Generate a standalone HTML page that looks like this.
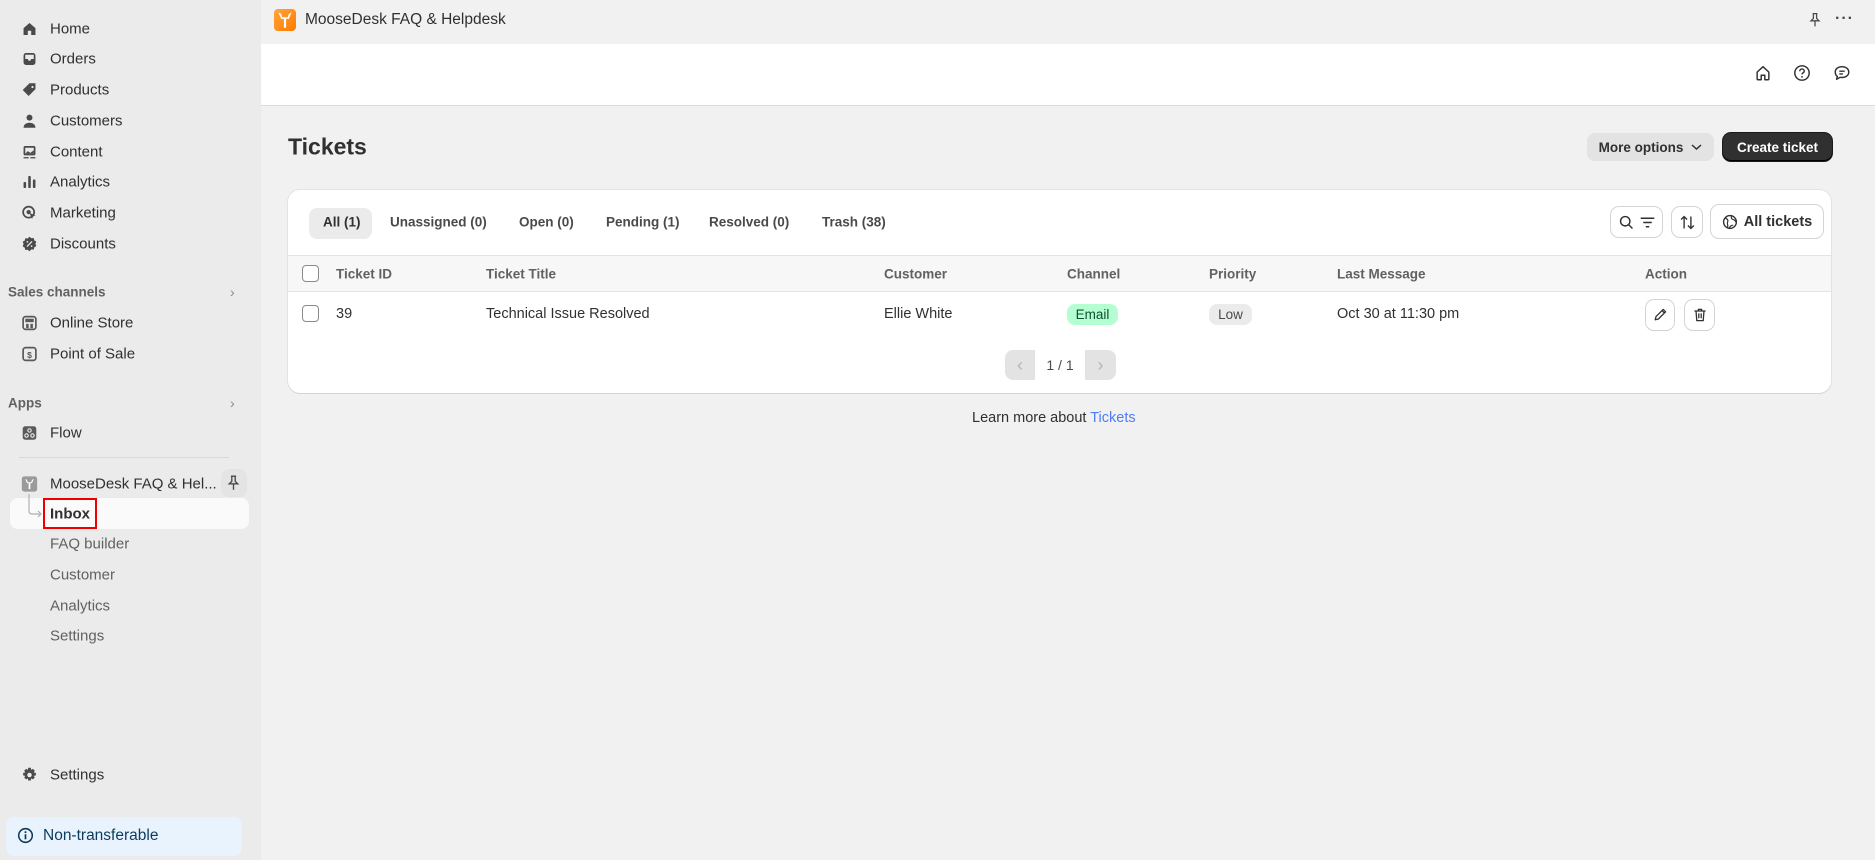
<!DOCTYPE html>
<html><head><meta charset="utf-8"><style>
*{box-sizing:border-box;margin:0;padding:0}
body{width:1875px;height:860px;overflow:hidden;background:#f1f1f1;font-family:"Liberation Sans",sans-serif;color:#303030;position:relative;font-size:15px}
.abs{position:absolute}
#side{position:absolute;left:0;top:0;width:261px;height:860px;background:#ebebeb}
.ni{position:absolute;left:50px;font-size:15px;color:#303030;transform:translateY(-50%);white-space:nowrap}
.ic{position:absolute;left:21px;width:17px;height:17px;transform:translateY(-50%)}
.sec{position:absolute;left:8px;font-size:13.5px;color:#616161;font-weight:bold;transform:translateY(-50%)}
.chev{position:absolute;left:230px;color:#8a8a8a;font-size:14px;transform:translateY(-50%)}
.sub{position:absolute;left:50px;font-size:15px;color:#616161;transform:translateY(-50%)}
.card{position:absolute;left:288px;top:190px;width:1543px;height:203px;background:#fff;border-radius:12px;box-shadow:0 1px 0 #d4d4d4,0 0 0 1px #e3e3e3}
.tab{position:absolute;top:222px;transform:translateY(-50%);font-size:13.5px;color:#4a4a4a;font-weight:bold}
.th{position:absolute;top:274px;transform:translateY(-50%);font-size:13.5px;color:#616161;font-weight:bold}
.td{position:absolute;top:314px;transform:translateY(-50%);font-size:14.5px;color:#303030}
.cb{position:absolute;width:17px;height:17px;border:1.5px solid #8a8a8a;border-radius:4px;background:#fff}
.btn{position:absolute;background:#fff;border-radius:8px;box-shadow:0 0 0 1px #d4d4d4,0 1px 0 #c0c0c0;display:flex;align-items:center;justify-content:center}
</style></head><body>
<div id="side">
  <svg class="ic" style="top:29px" viewBox="0 0 20 20"><path d="M3 9l7-6 7 6v8h-5v-5H8v5H3z" fill="#4a4a4a"/></svg>
  <div class="ni" style="top:29px">Home</div>
  <svg class="ic" style="top:59px" viewBox="0 0 20 20"><rect x="3" y="3" width="14" height="14" rx="3" fill="#4a4a4a"/><path d="M5 10h3l1 2h2l1-2h3v-5H5z" fill="#ebebeb"/></svg>
  <div class="ni" style="top:59px">Orders</div>
  <svg class="ic" style="top:90px" viewBox="0 0 20 20"><path d="M10 2h7v7l-8 8-7-7z" fill="#4a4a4a"/><circle cx="13.5" cy="6.5" r="1.3" fill="#ebebeb"/></svg>
  <div class="ni" style="top:90px">Products</div>
  <svg class="ic" style="top:121px" viewBox="0 0 20 20"><circle cx="10" cy="6" r="3.5" fill="#4a4a4a"/><path d="M3 18c0-4 3-6 7-6s7 2 7 6z" fill="#4a4a4a"/></svg>
  <div class="ni" style="top:121px">Customers</div>
  <svg class="ic" style="top:152px" viewBox="0 0 20 20"><rect x="3" y="3" width="14" height="11" rx="2" fill="#4a4a4a"/><rect x="5" y="5" width="10" height="7" fill="#ebebeb"/><path d="M5 12l3-3 3 2 4-3v4z" fill="#4a4a4a"/><rect x="3" y="16" width="6" height="1.5" fill="#4a4a4a"/><rect x="11" y="16" width="6" height="1.5" fill="#4a4a4a"/></svg>
  <div class="ni" style="top:152px">Content</div>
  <svg class="ic" style="top:182px" viewBox="0 0 20 20"><rect x="3" y="10" width="3" height="7" rx="1" fill="#4a4a4a"/><rect x="8.5" y="3" width="3" height="14" rx="1" fill="#4a4a4a"/><rect x="14" y="7" width="3" height="10" rx="1" fill="#4a4a4a"/></svg>
  <div class="ni" style="top:182px">Analytics</div>
  <svg class="ic" style="top:213px" viewBox="0 0 20 20"><circle cx="9" cy="9" r="6.5" fill="none" stroke="#4a4a4a" stroke-width="2"/><circle cx="9" cy="9" r="2.5" fill="#4a4a4a"/><path d="M10 10l7 3-3 1-1 3z" fill="#4a4a4a"/></svg>
  <div class="ni" style="top:213px">Marketing</div>
  <svg class="ic" style="top:244px" viewBox="0 0 20 20"><path d="M10 1.5l2.2 1.8 2.8-.3.6 2.8 2.5 1.4-1.2 2.6 1.2 2.6-2.5 1.4-.6 2.8-2.8-.3L10 18.5l-2.2-1.8-2.8.3-.6-2.8-2.5-1.4L3.1 10 1.9 7.4l2.5-1.4.6-2.8 2.8.3z" fill="#4a4a4a"/><path d="M7 13l6-6" stroke="#ebebeb" stroke-width="1.5"/><circle cx="7.5" cy="7.5" r="1" fill="#ebebeb"/><circle cx="12.5" cy="12.5" r="1" fill="#ebebeb"/></svg>
  <div class="ni" style="top:244px">Discounts</div>
  <div class="sec" style="top:292px">Sales channels</div><div class="chev" style="top:292px">›</div>
  <svg class="ic" style="top:323px" viewBox="0 0 20 20"><rect x="2.5" y="2.5" width="15" height="15" rx="3" fill="none" stroke="#5a5a5a" stroke-width="2"/><rect x="5" y="5" width="10" height="4" fill="#5a5a5a"/><rect x="6" y="11" width="3" height="5" fill="#5a5a5a"/><rect x="11" y="11" width="3" height="5" fill="#5a5a5a"/></svg>
  <div class="ni" style="top:323px">Online Store</div>
  <svg class="ic" style="top:354px" viewBox="0 0 20 20"><rect x="2.5" y="2.5" width="15" height="15" rx="3" fill="none" stroke="#5a5a5a" stroke-width="2"/><text x="10" y="14.5" font-size="10" font-weight="bold" text-anchor="middle" fill="#5a5a5a" font-family="Liberation Sans">$</text></svg>
  <div class="ni" style="top:354px">Point of Sale</div>
  <div class="sec" style="top:403px">Apps</div><div class="chev" style="top:403px">›</div>
  <svg class="ic" style="top:433px" viewBox="0 0 20 20"><rect x="2" y="2" width="16" height="16" rx="3" fill="#5a5a5a"/><circle cx="10" cy="7" r="2" fill="none" stroke="#ebebeb" stroke-width="1.3"/><circle cx="6.5" cy="13" r="2" fill="none" stroke="#ebebeb" stroke-width="1.3"/><circle cx="13.5" cy="13" r="2" fill="none" stroke="#ebebeb" stroke-width="1.3"/></svg>
  <div class="ni" style="top:433px">Flow</div>
  <div class="abs" style="left:19px;top:457px;width:210px;height:1px;background:#d8d8d8"></div>
  <svg class="ic" style="top:484px" viewBox="0 0 20 20"><rect x="1" y="1" width="18" height="18" rx="3" fill="#9a9a9a"/><path d="M5 4l2 5h2v7h2V9h2l2-5-2 1-1 3H8L7 5z" fill="#fff"/></svg>
  <div class="ni" style="top:484px">MooseDesk FAQ &amp; Hel...</div>
  <div class="abs" style="left:221px;top:469px;width:26px;height:28px;border-radius:8px;background:#e4e4e4"></div>
  <svg class="abs" style="left:225px;top:474px" width="17" height="18" viewBox="0 0 20 20"><path d="M7 2h6M8 2v6l-3 3h10l-3-3V2M10 11v7" fill="none" stroke="#4a4a4a" stroke-width="1.6"/></svg>
  <div class="abs" style="left:10px;top:498px;width:239px;height:31px;border-radius:8px;background:#fafafa"></div>
  <svg class="abs" style="left:26px;top:494px" width="18" height="26" viewBox="0 0 18 26"><path d="M3 0v17q0 3 3 3h9M12 17l3 3-3 3" fill="none" stroke="#b0b0b0" stroke-width="1.2"/></svg>
  <div class="abs" style="left:43px;top:498px;width:54px;height:31px;border:2px solid #e00"></div>
  <div class="ni" style="top:514px;font-weight:bold;color:#303030">Inbox</div>
  <div class="sub" style="top:544px">FAQ builder</div>
  <div class="sub" style="top:575px">Customer</div>
  <div class="sub" style="top:606px">Analytics</div>
  <div class="sub" style="top:636px">Settings</div>
  <svg class="ic" style="top:775px" viewBox="0 0 20 20"><path d="M8.5 1.5h3l.5 2.5 2-1.2 2.2 2.1-1.2 2.1 2.5.5v3l-2.5.5 1.2 2.1-2.2 2.1-2-1.2-.5 2.5h-3l-.5-2.5-2 1.2-2.2-2.1 1.2-2.1-2.5-.5v-3l2.5-.5L3.8 4.9 6 2.8l2 1.2z" fill="#4a4a4a"/><circle cx="10" cy="10" r="2.6" fill="#ebebeb"/></svg>
  <div class="ni" style="top:775px">Settings</div>
  <div class="abs" style="left:6px;top:817px;width:236px;height:39px;border-radius:8px;background:#e8f3fd"></div>
  <svg class="abs" style="left:17px;top:827px" width="17" height="17" viewBox="0 0 20 20"><circle cx="10" cy="10" r="8" fill="none" stroke="#0c3b5e" stroke-width="1.8"/><rect x="9" y="8.5" width="2" height="6" fill="#0c3b5e"/><circle cx="10" cy="6" r="1.2" fill="#0c3b5e"/></svg>
  <div class="abs" style="left:43px;top:836px;transform:translateY(-50%);font-size:15.5px;color:#0c3b5e">Non-transferable</div>
</div>
<!-- top bar -->
<div class="abs" style="left:274px;top:9px;width:22px;height:22px;border-radius:4px;background:linear-gradient(135deg,#ffa53a,#ff7a00)"></div>
<svg class="abs" style="left:274px;top:9px" width="22" height="22" viewBox="0 0 20 20"><path d="M4 3l2.5 6h2.5v8h2V9h2.5L16 3l-2.5 1.5-1 3h-5l-1-3z" fill="#fff"/></svg>
<div class="abs" style="left:305px;top:20px;transform:translateY(-50%);font-size:15.5px;color:#303030">MooseDesk FAQ &amp; Helpdesk</div>
<svg class="abs" style="left:1807px;top:11px" width="16" height="18" viewBox="0 0 20 20"><path d="M7 2h6M8 2v6l-3 3h10l-3-3V2M10 11v7" fill="none" stroke="#4a4a4a" stroke-width="1.6"/></svg>
<div class="abs" style="left:1835px;top:10px;font-size:16px;font-weight:bold;color:#4a4a4a;letter-spacing:1px">···</div>
<div class="abs" style="left:261px;top:44px;width:1614px;height:62px;background:#fff;border-bottom:1px solid #dcdcdc"></div>
<svg class="abs" style="left:1754px;top:64px" width="18" height="18" viewBox="0 0 20 20"><path d="M3.5 9L10 3l6.5 6v7.5a1 1 0 01-1 1H12v-5H8v5H4.5a1 1 0 01-1-1z" fill="none" stroke="#303030" stroke-width="1.6" stroke-linejoin="round"/></svg>
<svg class="abs" style="left:1793px;top:64px" width="18" height="18" viewBox="0 0 20 20"><circle cx="10" cy="10" r="8" fill="none" stroke="#303030" stroke-width="1.6"/><path d="M7.5 8a2.5 2.5 0 115 0c0 1.5-2.5 2-2.5 3.5" fill="none" stroke="#303030" stroke-width="1.6"/><circle cx="10" cy="14.3" r="1" fill="#303030"/></svg>
<svg class="abs" style="left:1833px;top:64px" width="18" height="18" viewBox="0 0 20 20"><path d="M10 3c4.4 0 7.5 2.5 7.5 6s-3.1 6-7.5 6c-.8 0-1.5-.1-2.2-.2L4 17l.8-3.2C3.4 12.7 2.5 11 2.5 9c0-3.5 3.1-6 7.5-6z" fill="none" stroke="#303030" stroke-width="1.6" stroke-linejoin="round"/><path d="M7 8h6M7 11h4" stroke="#303030" stroke-width="1.5"/></svg>
<!-- page header -->
<div class="abs" style="left:288px;top:147px;transform:translateY(-50%);font-size:23px;font-weight:bold;color:#303030">Tickets</div>
<div class="abs" style="left:1587px;top:133px;width:127px;height:28px;border-radius:8px;background:#e3e3e3;font-size:13.5px;font-weight:bold;color:#303030;display:flex;align-items:center;justify-content:center;gap:8px">More options <svg width="11" height="8" viewBox="0 0 11 8"><path d="M1 2l4.5 4L10 2" fill="none" stroke="#303030" stroke-width="1.5"/></svg></div>
<div class="abs" style="left:1723px;top:133px;width:109px;height:28px;border-radius:8px;background:#303030;box-shadow:inset 0 -1px 0 #000,0 0 0 1px #1a1a1a;font-size:13.5px;font-weight:bold;color:#fff;display:flex;align-items:center;justify-content:center">Create ticket</div>
<!-- card -->
<div class="card"></div>
<div class="abs" style="left:309px;top:208px;width:63px;height:31px;border-radius:8px;background:#ebebeb"></div>
<div class="tab" style="left:323px;color:#303030">All (1)</div>
<div class="tab" style="left:390px">Unassigned (0)</div>
<div class="tab" style="left:519px">Open (0)</div>
<div class="tab" style="left:606px">Pending (1)</div>
<div class="tab" style="left:709px">Resolved (0)</div>
<div class="tab" style="left:822px">Trash (38)</div>
<div class="btn" style="left:1611px;top:207px;width:51px;height:30px;gap:4px"><svg width="17" height="17" viewBox="0 0 20 20"><circle cx="8.5" cy="8.5" r="5.5" fill="none" stroke="#303030" stroke-width="1.7"/><path d="M12.5 12.5l4.5 4.5" stroke="#303030" stroke-width="1.7"/></svg><svg width="17" height="17" viewBox="0 0 20 20"><path d="M2 5h16M5 10h10M8 15h4" stroke="#303030" stroke-width="1.7"/></svg></div>
<div class="btn" style="left:1672px;top:207px;width:30px;height:30px"><svg width="17" height="17" viewBox="0 0 20 20"><path d="M6 17V3M2.5 6.5L6 3l3.5 3.5M14 3v14M10.5 13.5L14 17l3.5-3.5" fill="none" stroke="#303030" stroke-width="1.6"/></svg></div>
<div class="btn" style="left:1711px;top:205px;width:112px;height:33px;gap:6px;font-size:14.5px;font-weight:bold"><svg width="16" height="16" viewBox="0 0 20 20"><circle cx="10" cy="10" r="8" fill="none" stroke="#303030" stroke-width="1.7"/><path d="M4 5c3 1 4 3 3 5s1 4 0 7M12 2.5c-1 2 0 4 2 4.5s3 2 3.5 3.5M9 18c1-3 3-4 5-4" fill="none" stroke="#303030" stroke-width="1.5"/></svg>All tickets</div>
<div class="abs" style="left:288px;top:255px;width:1543px;height:37px;background:#f7f7f7;border-top:1px solid #e3e3e3;border-bottom:1px solid #e3e3e3"></div>
<div class="cb" style="left:302px;top:265px"></div>
<div class="th" style="left:336px">Ticket ID</div>
<div class="th" style="left:486px">Ticket Title</div>
<div class="th" style="left:884px">Customer</div>
<div class="th" style="left:1067px">Channel</div>
<div class="th" style="left:1209px">Priority</div>
<div class="th" style="left:1337px">Last Message</div>
<div class="th" style="left:1645px">Action</div>
<div class="cb" style="left:302px;top:305px"></div>
<div class="td" style="left:336px">39</div>
<div class="td" style="left:486px">Technical Issue Resolved</div>
<div class="td" style="left:884px">Ellie White</div>
<div class="abs" style="left:1067px;top:304px;width:51px;height:21px;border-radius:8px;background:#b4fed2;color:#0c5132;font-size:13.5px;display:flex;align-items:center;justify-content:center">Email</div>
<div class="abs" style="left:1209px;top:304px;width:43px;height:21px;border-radius:8px;background:#ebebeb;color:#4a4a4a;font-size:13.5px;display:flex;align-items:center;justify-content:center">Low</div>
<div class="td" style="left:1337px">Oct 30 at 11:30 pm</div>
<div class="btn" style="left:1646px;top:300px;width:28px;height:30px"><svg width="16" height="16" viewBox="0 0 20 20"><path d="M4 16l1-4L14 3l3 3-9 9z M12.5 4.5l3 3" fill="none" stroke="#303030" stroke-width="1.6" stroke-linejoin="round"/></svg></div>
<div class="btn" style="left:1685px;top:300px;width:29px;height:30px"><svg width="16" height="16" viewBox="0 0 20 20"><path d="M3 5h14M8 5V3h4v2M5 5l1 12h8l1-12M8.5 8v6M11.5 8v6" fill="none" stroke="#303030" stroke-width="1.6"/></svg></div>
<div class="abs" style="left:1005px;top:350px;width:30px;height:30px;border-radius:8px 0 0 8px;background:#e3e3e3;color:#b5b5b5;font-size:18px;display:flex;align-items:center;justify-content:center">‹</div>
<div class="abs" style="left:1035px;top:365px;width:50px;transform:translateY(-50%);text-align:center;font-size:14px;color:#4a4a4a">1 / 1</div>
<div class="abs" style="left:1085px;top:350px;width:31px;height:30px;border-radius:0 8px 8px 0;background:#e3e3e3;color:#b5b5b5;font-size:18px;display:flex;align-items:center;justify-content:center">›</div>
<div class="abs" style="left:972px;top:418px;transform:translateY(-50%);font-size:14.5px;color:#303030">Learn more about <span style="color:#4f7cf7">Tickets</span></div>
</body></html>
